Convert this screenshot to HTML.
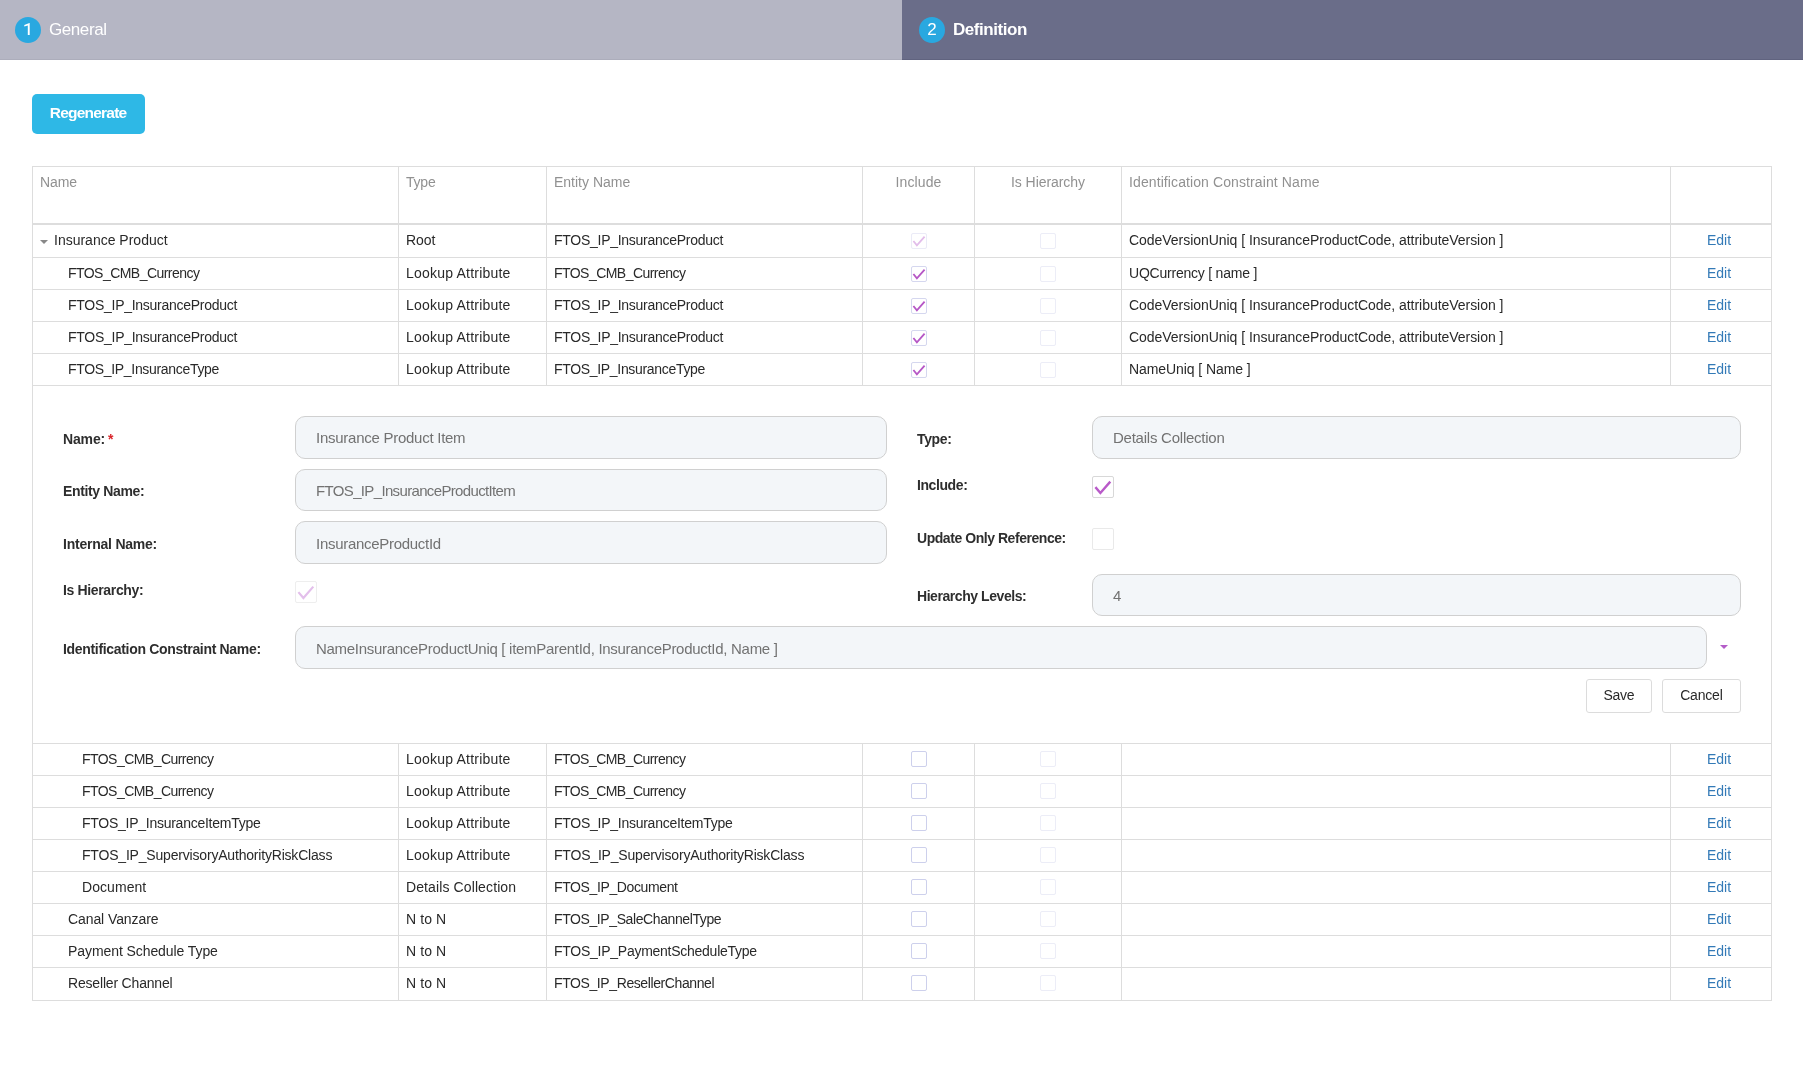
<!DOCTYPE html>
<html><head><meta charset="utf-8"><title>Definition</title><style>
html,body{margin:0;padding:0;background:#fff;}
body{width:1803px;height:1066px;position:relative;overflow:hidden;font-family:"Liberation Sans",sans-serif;}
div,span,svg{position:absolute;box-sizing:content-box;}
span{white-space:pre;}
.t{font-size:14px;line-height:14px;color:#292929;}
.th{font-size:14px;line-height:14px;color:#919191;}
.hd{font-size:17px;line-height:17px;color:#fff;}
.hdb{font-size:17px;line-height:17px;color:#fff;font-weight:bold;}
.rg{font-size:15.5px;line-height:15px;color:#fff;font-weight:bold;}
.lb{font-size:14px;line-height:14px;color:#2e2e2e;font-weight:bold;}
.iv{font-size:15px;line-height:15px;color:#727272;}
.in{background:#f3f6f9;border:1px solid #d0d0d0;border-radius:10px;}
.bt{background:#fff;border:1px solid #dcdcdc;border-radius:3px;}
</style></head>
<body>
<div id="root" style="left:0;top:0;width:1803px;height:1066px;background:#fff;will-change:transform">
<div style="left:0px;top:0px;width:902px;height:59px;background:#b5b6c4"></div>
<div style="left:0px;top:59px;width:902px;height:1px;background:#acadbb"></div>
<div style="left:902px;top:0px;width:901px;height:59px;background:#6a6d89"></div>
<div style="left:902px;top:59px;width:901px;height:1px;background:#60637f"></div>
<div style="left:15px;top:17px;width:26px;height:26px;background:#29a8e0;border-radius:50%"></div>
<div style="left:919px;top:17px;width:26px;height:26px;background:#29a8e0;border-radius:50%"></div>
<svg style="left:0;top:0" width="60" height="60" viewBox="0 0 60 60"><path d="M29.7 23 L29.7 35 L27.8 35 L27.8 25.4 L24.3 26.6 L24.3 25.1 L29.4 23 Z" fill="#fff"/></svg>
<span class="hd" style="left:732px;width:400px;text-align:center;top:21px;">2</span>
<span class="hd" style="left:49px;top:21px;letter-spacing:-0.42px;">General</span>
<span class="hdb" style="left:953px;top:21px;letter-spacing:-0.44px;">Definition</span>
<div style="left:32px;top:94px;width:113px;height:40px;background:#2eb8e6;border-radius:5px"></div>
<span class="rg" style="left:-111.89px;width:400px;text-align:center;top:105px;letter-spacing:-0.78px;">Regenerate</span>
<div style="left:32px;top:166px;width:1740px;height:1px;background:#dddddd"></div>
<div style="left:32px;top:1000px;width:1740px;height:1px;background:#dddddd"></div>
<div style="left:32px;top:166px;width:1px;height:835px;background:#dddddd"></div>
<div style="left:1771px;top:166px;width:1px;height:835px;background:#dddddd"></div>
<div style="left:32px;top:223px;width:1740px;height:2px;background:#dddddd"></div>
<div style="left:32px;top:257px;width:1740px;height:1px;background:#dddddd"></div>
<div style="left:32px;top:289px;width:1740px;height:1px;background:#dddddd"></div>
<div style="left:32px;top:321px;width:1740px;height:1px;background:#dddddd"></div>
<div style="left:32px;top:353px;width:1740px;height:1px;background:#dddddd"></div>
<div style="left:32px;top:385px;width:1740px;height:1px;background:#dddddd"></div>
<div style="left:32px;top:743px;width:1740px;height:1px;background:#dddddd"></div>
<div style="left:32px;top:775px;width:1740px;height:1px;background:#dddddd"></div>
<div style="left:32px;top:807px;width:1740px;height:1px;background:#dddddd"></div>
<div style="left:32px;top:839px;width:1740px;height:1px;background:#dddddd"></div>
<div style="left:32px;top:871px;width:1740px;height:1px;background:#dddddd"></div>
<div style="left:32px;top:903px;width:1740px;height:1px;background:#dddddd"></div>
<div style="left:32px;top:935px;width:1740px;height:1px;background:#dddddd"></div>
<div style="left:32px;top:967px;width:1740px;height:1px;background:#dddddd"></div>
<div style="left:398px;top:166px;width:1px;height:220px;background:#dddddd"></div>
<div style="left:398px;top:743px;width:1px;height:258px;background:#dddddd"></div>
<div style="left:546px;top:166px;width:1px;height:220px;background:#dddddd"></div>
<div style="left:546px;top:743px;width:1px;height:258px;background:#dddddd"></div>
<div style="left:862px;top:166px;width:1px;height:220px;background:#dddddd"></div>
<div style="left:862px;top:743px;width:1px;height:258px;background:#dddddd"></div>
<div style="left:974px;top:166px;width:1px;height:220px;background:#dddddd"></div>
<div style="left:974px;top:743px;width:1px;height:258px;background:#dddddd"></div>
<div style="left:1121px;top:166px;width:1px;height:220px;background:#dddddd"></div>
<div style="left:1121px;top:743px;width:1px;height:258px;background:#dddddd"></div>
<div style="left:1670px;top:166px;width:1px;height:220px;background:#dddddd"></div>
<div style="left:1670px;top:743px;width:1px;height:258px;background:#dddddd"></div>
<span class="th" style="left:40px;top:175px;letter-spacing:-0.1px;">Name</span>
<span class="th" style="left:406px;top:175px;letter-spacing:-0.23px;">Type</span>
<span class="th" style="left:554px;top:175px;">Entity Name</span>
<span class="th" style="left:718.55px;width:400px;text-align:center;top:175px;letter-spacing:0.1px;">Include</span>
<span class="th" style="left:847.97px;width:400px;text-align:center;top:175px;letter-spacing:-0.07px;">Is Hierarchy</span>
<span class="th" style="left:1129px;top:175px;letter-spacing:0.1px;">Identification Constraint Name</span>
<span class="t" style="left:54px;top:233px;">Insurance Product</span>
<span class="t" style="left:406px;top:233px;letter-spacing:-0.03px;">Root</span>
<span class="t" style="left:554px;top:233px;letter-spacing:-0.27px;">FTOS_IP_InsuranceProduct</span>
<span class="t" style="left:1129px;top:233px;letter-spacing:-0.04px;">CodeVersionUniq [ InsuranceProductCode, attributeVersion ]</span>
<span class="t" style="left:1707px;top:233px;color:#337ab7">Edit</span>
<div style="left:911px;top:233px;width:14px;height:14px;border:1px solid #ebebf7;border-radius:2px;background:#fff"><svg width="14" height="14" viewBox="0 0 14 14" style="position:absolute;left:0;top:0"><path d="M1.4 7.0 L4.9 11.4 L12.6 2.6" fill="none" stroke="#e2bdea" stroke-width="1.8" stroke-linecap="butt" stroke-linejoin="miter"/></svg></div>
<div style="left:1040px;top:233px;width:14px;height:14px;border:1px solid #ecedf7;border-radius:2px;background:#fff"></div>
<span class="t" style="left:68px;top:266px;letter-spacing:-0.54px;">FTOS_CMB_Currency</span>
<span class="t" style="left:406px;top:266px;letter-spacing:0.21px;">Lookup Attribute</span>
<span class="t" style="left:554px;top:266px;letter-spacing:-0.54px;">FTOS_CMB_Currency</span>
<span class="t" style="left:1129px;top:266px;letter-spacing:-0.22px;">UQCurrency [ name ]</span>
<span class="t" style="left:1707px;top:266px;color:#337ab7">Edit</span>
<div style="left:911px;top:266px;width:14px;height:14px;border:1px solid #d5d7ef;border-radius:2px;background:#fff"><svg width="14" height="14" viewBox="0 0 14 14" style="position:absolute;left:0;top:0"><path d="M1.4 7.0 L4.9 11.4 L12.6 2.6" fill="none" stroke="#b657c6" stroke-width="1.8" stroke-linecap="butt" stroke-linejoin="miter"/></svg></div>
<div style="left:1040px;top:266px;width:14px;height:14px;border:1px solid #ecedf7;border-radius:2px;background:#fff"></div>
<span class="t" style="left:68px;top:298px;letter-spacing:-0.27px;">FTOS_IP_InsuranceProduct</span>
<span class="t" style="left:406px;top:298px;letter-spacing:0.21px;">Lookup Attribute</span>
<span class="t" style="left:554px;top:298px;letter-spacing:-0.27px;">FTOS_IP_InsuranceProduct</span>
<span class="t" style="left:1129px;top:298px;letter-spacing:-0.04px;">CodeVersionUniq [ InsuranceProductCode, attributeVersion ]</span>
<span class="t" style="left:1707px;top:298px;color:#337ab7">Edit</span>
<div style="left:911px;top:298px;width:14px;height:14px;border:1px solid #d5d7ef;border-radius:2px;background:#fff"><svg width="14" height="14" viewBox="0 0 14 14" style="position:absolute;left:0;top:0"><path d="M1.4 7.0 L4.9 11.4 L12.6 2.6" fill="none" stroke="#b657c6" stroke-width="1.8" stroke-linecap="butt" stroke-linejoin="miter"/></svg></div>
<div style="left:1040px;top:298px;width:14px;height:14px;border:1px solid #ecedf7;border-radius:2px;background:#fff"></div>
<span class="t" style="left:68px;top:330px;letter-spacing:-0.27px;">FTOS_IP_InsuranceProduct</span>
<span class="t" style="left:406px;top:330px;letter-spacing:0.21px;">Lookup Attribute</span>
<span class="t" style="left:554px;top:330px;letter-spacing:-0.27px;">FTOS_IP_InsuranceProduct</span>
<span class="t" style="left:1129px;top:330px;letter-spacing:-0.04px;">CodeVersionUniq [ InsuranceProductCode, attributeVersion ]</span>
<span class="t" style="left:1707px;top:330px;color:#337ab7">Edit</span>
<div style="left:911px;top:330px;width:14px;height:14px;border:1px solid #d5d7ef;border-radius:2px;background:#fff"><svg width="14" height="14" viewBox="0 0 14 14" style="position:absolute;left:0;top:0"><path d="M1.4 7.0 L4.9 11.4 L12.6 2.6" fill="none" stroke="#b657c6" stroke-width="1.8" stroke-linecap="butt" stroke-linejoin="miter"/></svg></div>
<div style="left:1040px;top:330px;width:14px;height:14px;border:1px solid #ecedf7;border-radius:2px;background:#fff"></div>
<span class="t" style="left:68px;top:362px;letter-spacing:-0.32px;">FTOS_IP_InsuranceType</span>
<span class="t" style="left:406px;top:362px;letter-spacing:0.21px;">Lookup Attribute</span>
<span class="t" style="left:554px;top:362px;letter-spacing:-0.32px;">FTOS_IP_InsuranceType</span>
<span class="t" style="left:1129px;top:362px;letter-spacing:-0.08px;">NameUniq [ Name ]</span>
<span class="t" style="left:1707px;top:362px;color:#337ab7">Edit</span>
<div style="left:911px;top:362px;width:14px;height:14px;border:1px solid #d5d7ef;border-radius:2px;background:#fff"><svg width="14" height="14" viewBox="0 0 14 14" style="position:absolute;left:0;top:0"><path d="M1.4 7.0 L4.9 11.4 L12.6 2.6" fill="none" stroke="#b657c6" stroke-width="1.8" stroke-linecap="butt" stroke-linejoin="miter"/></svg></div>
<div style="left:1040px;top:362px;width:14px;height:14px;border:1px solid #ecedf7;border-radius:2px;background:#fff"></div>
<span class="t" style="left:82px;top:752px;letter-spacing:-0.54px;">FTOS_CMB_Currency</span>
<span class="t" style="left:406px;top:752px;letter-spacing:0.21px;">Lookup Attribute</span>
<span class="t" style="left:554px;top:752px;letter-spacing:-0.54px;">FTOS_CMB_Currency</span>
<span class="t" style="left:1707px;top:752px;color:#337ab7">Edit</span>
<div style="left:911px;top:751px;width:14px;height:14px;border:1px solid #cdd0ec;border-radius:2px;background:#fff"></div>
<div style="left:1040px;top:751px;width:14px;height:14px;border:1px solid #ecedf7;border-radius:2px;background:#fff"></div>
<span class="t" style="left:82px;top:784px;letter-spacing:-0.54px;">FTOS_CMB_Currency</span>
<span class="t" style="left:406px;top:784px;letter-spacing:0.21px;">Lookup Attribute</span>
<span class="t" style="left:554px;top:784px;letter-spacing:-0.54px;">FTOS_CMB_Currency</span>
<span class="t" style="left:1707px;top:784px;color:#337ab7">Edit</span>
<div style="left:911px;top:783px;width:14px;height:14px;border:1px solid #cdd0ec;border-radius:2px;background:#fff"></div>
<div style="left:1040px;top:783px;width:14px;height:14px;border:1px solid #ecedf7;border-radius:2px;background:#fff"></div>
<span class="t" style="left:82px;top:816px;letter-spacing:-0.26px;">FTOS_IP_InsuranceItemType</span>
<span class="t" style="left:406px;top:816px;letter-spacing:0.21px;">Lookup Attribute</span>
<span class="t" style="left:554px;top:816px;letter-spacing:-0.26px;">FTOS_IP_InsuranceItemType</span>
<span class="t" style="left:1707px;top:816px;color:#337ab7">Edit</span>
<div style="left:911px;top:815px;width:14px;height:14px;border:1px solid #cdd0ec;border-radius:2px;background:#fff"></div>
<div style="left:1040px;top:815px;width:14px;height:14px;border:1px solid #ecedf7;border-radius:2px;background:#fff"></div>
<span class="t" style="left:82px;top:848px;letter-spacing:-0.19px;">FTOS_IP_SupervisoryAuthorityRiskClass</span>
<span class="t" style="left:406px;top:848px;letter-spacing:0.21px;">Lookup Attribute</span>
<span class="t" style="left:554px;top:848px;letter-spacing:-0.19px;">FTOS_IP_SupervisoryAuthorityRiskClass</span>
<span class="t" style="left:1707px;top:848px;color:#337ab7">Edit</span>
<div style="left:911px;top:847px;width:14px;height:14px;border:1px solid #cdd0ec;border-radius:2px;background:#fff"></div>
<div style="left:1040px;top:847px;width:14px;height:14px;border:1px solid #ecedf7;border-radius:2px;background:#fff"></div>
<span class="t" style="left:82px;top:880px;letter-spacing:0.06px;">Document</span>
<span class="t" style="left:406px;top:880px;letter-spacing:0.11px;">Details Collection</span>
<span class="t" style="left:554px;top:880px;letter-spacing:-0.38px;">FTOS_IP_Document</span>
<span class="t" style="left:1707px;top:880px;color:#337ab7">Edit</span>
<div style="left:911px;top:879px;width:14px;height:14px;border:1px solid #cdd0ec;border-radius:2px;background:#fff"></div>
<div style="left:1040px;top:879px;width:14px;height:14px;border:1px solid #ecedf7;border-radius:2px;background:#fff"></div>
<span class="t" style="left:68px;top:912px;letter-spacing:-0.09px;">Canal Vanzare</span>
<span class="t" style="left:406px;top:912px;letter-spacing:0.08px;">N to N</span>
<span class="t" style="left:554px;top:912px;letter-spacing:-0.4px;">FTOS_IP_SaleChannelType</span>
<span class="t" style="left:1707px;top:912px;color:#337ab7">Edit</span>
<div style="left:911px;top:911px;width:14px;height:14px;border:1px solid #cdd0ec;border-radius:2px;background:#fff"></div>
<div style="left:1040px;top:911px;width:14px;height:14px;border:1px solid #ecedf7;border-radius:2px;background:#fff"></div>
<span class="t" style="left:68px;top:944px;letter-spacing:-0.08px;">Payment Schedule Type</span>
<span class="t" style="left:406px;top:944px;letter-spacing:0.08px;">N to N</span>
<span class="t" style="left:554px;top:944px;letter-spacing:-0.26px;">FTOS_IP_PaymentScheduleType</span>
<span class="t" style="left:1707px;top:944px;color:#337ab7">Edit</span>
<div style="left:911px;top:943px;width:14px;height:14px;border:1px solid #cdd0ec;border-radius:2px;background:#fff"></div>
<div style="left:1040px;top:943px;width:14px;height:14px;border:1px solid #ecedf7;border-radius:2px;background:#fff"></div>
<span class="t" style="left:68px;top:976px;letter-spacing:-0.18px;">Reseller Channel</span>
<span class="t" style="left:406px;top:976px;letter-spacing:0.08px;">N to N</span>
<span class="t" style="left:554px;top:976px;letter-spacing:-0.4px;">FTOS_IP_ResellerChannel</span>
<span class="t" style="left:1707px;top:976px;color:#337ab7">Edit</span>
<div style="left:911px;top:975px;width:14px;height:14px;border:1px solid #cdd0ec;border-radius:2px;background:#fff"></div>
<div style="left:1040px;top:975px;width:14px;height:14px;border:1px solid #ecedf7;border-radius:2px;background:#fff"></div>
<div style="left:40px;top:240px;width:0;height:0;border-left:4px solid transparent;border-right:4px solid transparent;border-top:4px solid #888"></div>
<span class="lb" style="left:63px;top:432px;letter-spacing:-0.15px;">Name:</span>
<span class="lb" style="left:108px;top:432px;color:#d9262b">*</span>
<span class="lb" style="left:63px;top:484px;letter-spacing:-0.36px;">Entity Name:</span>
<span class="lb" style="left:63px;top:537px;letter-spacing:-0.23px;">Internal Name:</span>
<span class="lb" style="left:63px;top:583px;letter-spacing:-0.35px;">Is Hierarchy:</span>
<span class="lb" style="left:63px;top:642px;letter-spacing:-0.32px;">Identification Constraint Name:</span>
<span class="lb" style="left:917px;top:432px;letter-spacing:-0.35px;">Type:</span>
<span class="lb" style="left:917px;top:478px;letter-spacing:-0.41px;">Include:</span>
<span class="lb" style="left:917px;top:531px;letter-spacing:-0.45px;">Update Only Reference:</span>
<span class="lb" style="left:917px;top:589px;letter-spacing:-0.44px;">Hierarchy Levels:</span>
<div class="in" style="left:295px;top:416px;width:590px;height:41px"></div>
<span class="iv" style="left:316px;top:430px;letter-spacing:-0.26px;">Insurance Product Item</span>
<div class="in" style="left:295px;top:469px;width:590px;height:40px"></div>
<span class="iv" style="left:316px;top:483px;letter-spacing:-0.65px;">FTOS_IP_InsuranceProductItem</span>
<div class="in" style="left:295px;top:521px;width:590px;height:41px"></div>
<span class="iv" style="left:316px;top:536px;letter-spacing:-0.29px;">InsuranceProductId</span>
<div class="in" style="left:1092px;top:416px;width:647px;height:41px"></div>
<span class="iv" style="left:1113px;top:430px;letter-spacing:-0.24px;">Details Collection</span>
<div class="in" style="left:1092px;top:574px;width:647px;height:40px"></div>
<span class="iv" style="left:1113px;top:588px;">4</span>
<div class="in" style="left:295px;top:626px;width:1410px;height:41px"></div>
<span class="iv" style="left:316px;top:641px;letter-spacing:-0.29px;">NameInsuranceProductUniq [ itemParentId, InsuranceProductId, Name ]</span>
<div style="left:295px;top:581px;width:20px;height:20px;border:1px solid #eeeeee;border-radius:2px;background:#fff"><svg width="20" height="20" viewBox="0 0 20 20" style="position:absolute;left:0;top:0"><path d="M2.4 10.1 L7.4 16.0 L17.3 4.6" fill="none" stroke="#e3bfeb" stroke-width="2.2" stroke-linecap="butt" stroke-linejoin="miter"/></svg></div>
<div style="left:1092px;top:476px;width:20px;height:20px;border:1px solid #d8d8d8;border-radius:2px;background:#fff"><svg width="20" height="20" viewBox="0 0 20 20" style="position:absolute;left:0;top:0"><path d="M2.4 10.1 L7.4 16.0 L17.3 4.6" fill="none" stroke="#b95ac9" stroke-width="2.4" stroke-linecap="butt" stroke-linejoin="miter"/></svg></div>
<div style="left:1092px;top:528px;width:20px;height:20px;border:1px solid #e9e9e9;border-radius:2px;background:#fff"></div>
<div style="left:1719.5px;top:644.5px;width:0;height:0;border-left:4.5px solid transparent;border-right:4.5px solid transparent;border-top:4.5px solid #b45cc8"></div>
<div class="bt" style="left:1586px;top:679px;width:64px;height:32px"></div>
<div class="bt" style="left:1662px;top:679px;width:77px;height:32px"></div>
<span class="t" style="left:1418.84px;width:400px;text-align:center;top:688px;letter-spacing:-0.33px;">Save</span>
<span class="t" style="left:1501.40px;width:400px;text-align:center;top:688px;letter-spacing:-0.2px;">Cancel</span>
</div>
</body></html>
